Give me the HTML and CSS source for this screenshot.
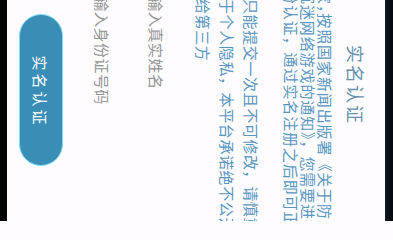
FILE: index.html
```html
<!DOCTYPE html>
<html lang="zh-CN">
<head>
<meta charset="utf-8">
<title>实名认证</title>
<link rel="stylesheet" href="styles.css">
</head>
<body>
<div class="screen">
  <div class="page">
    <div class="bar bar-top"></div>
    <h1 class="title">实名认证</h1>
    <div class="content">
      <p class="intro">
        <span class="ln">家<span class="narrow">，</span>按照国家新闻出版署《关于防止未成年人</span>
        <span class="ln">沉迷网络游戏的通知》，您需要进行实名身</span>
        <span class="ln">份认证，通过实名注册之后即可正常进入游戏。</span>
      </p>
      <p class="notice">
        <span class="ln">您只能提交一次且不可修改，请慎重填写。身份信息</span>
        <span class="ln">属于个人隐私，本平台承诺绝不公开或泄露您的个人信</span>
        <span class="ln">息给第三方</span>
      </p>
      <input class="field" type="text" placeholder="请输入真实姓名">
      <input class="field" type="text" placeholder="请输入身份证号码">
    </div>
    <div class="btn-row"><button class="btn" type="button">实名认证</button></div>
    <div class="bar bar-bottom"></div>
  </div>
</div>
</body>
</html>
```
FILE: styles.css
```css
html, body {
  margin: 0;
  padding: 0;
  width: 393px;
  height: 221px;
  overflow: hidden;
  background: #fefcff;
}

.screen {
  width: 393px;
  height: 221px;
  overflow: hidden;
  background: #fefcff;
}

.page {
  width: 294px;
  height: 393px;
  transform-origin: 0 0;
  transform: translateX(393px) rotate(90deg) translateX(-62px);
  display: flex;
  flex-direction: column;
  background: #fefcff;
  font-family: "Noto Sans CJK SC", "Noto Sans", sans-serif;
}

.bar {
  flex: none;
}

.bar-top {
  height: 8px;
  background: linear-gradient(#05070d, #111726);
}

.bar-bottom {
  margin-top: auto;
  height: 7px;
  background: #020504;
}

.title {
  margin: 17px 0 0;
  font-size: 18px;
  line-height: 24px;
  font-weight: 400;
  letter-spacing: 2px;
  text-align: center;
  color: #6690ac;
}

.content {
  display: flex;
  flex-direction: column;
  padding: 0 43px;
}

.intro,
.notice {
  font-size: 15px;
  color: #5896c0;
}

.intro {
  margin: 10px 0 0 8px;
  line-height: 17px;
  letter-spacing: 0.9px;
}

.notice {
  margin: 20px 0 0 2.4px;
  line-height: 24px;
  letter-spacing: 0.6px;
}

.ln {
  display: block;
  white-space: nowrap;
}

.narrow {
  font-feature-settings: "halt";
}

.field {
  margin: 15px 0 0;
  height: 40px;
  width: 100%;
  padding: 0;
  border: 0;
  outline: none;
  background: transparent;
  font-family: "Noto Sans CJK SC", "Noto Sans", sans-serif;
  font-size: 15px;
  line-height: 40px;
  letter-spacing: 0.5px;
  color: #333;
}

.field + .field {
  margin-top: 14px;
}

.field::placeholder {
  color: #949494;
}

.btn-row {
  margin-top: 19px;
  padding-left: 10px;
  display: flex;
  justify-content: center;
}

.btn {
  width: 152px;
  height: 44px;
  border-radius: 22px;
  border: 1px solid #7ddcf2;
  background: #3a8db7;
  color: #ffffff;
  font-family: "Noto Sans CJK SC", "Noto Sans", sans-serif;
  font-size: 15px;
  letter-spacing: 3px;
  padding: 0 0 0 3px;
}
```
